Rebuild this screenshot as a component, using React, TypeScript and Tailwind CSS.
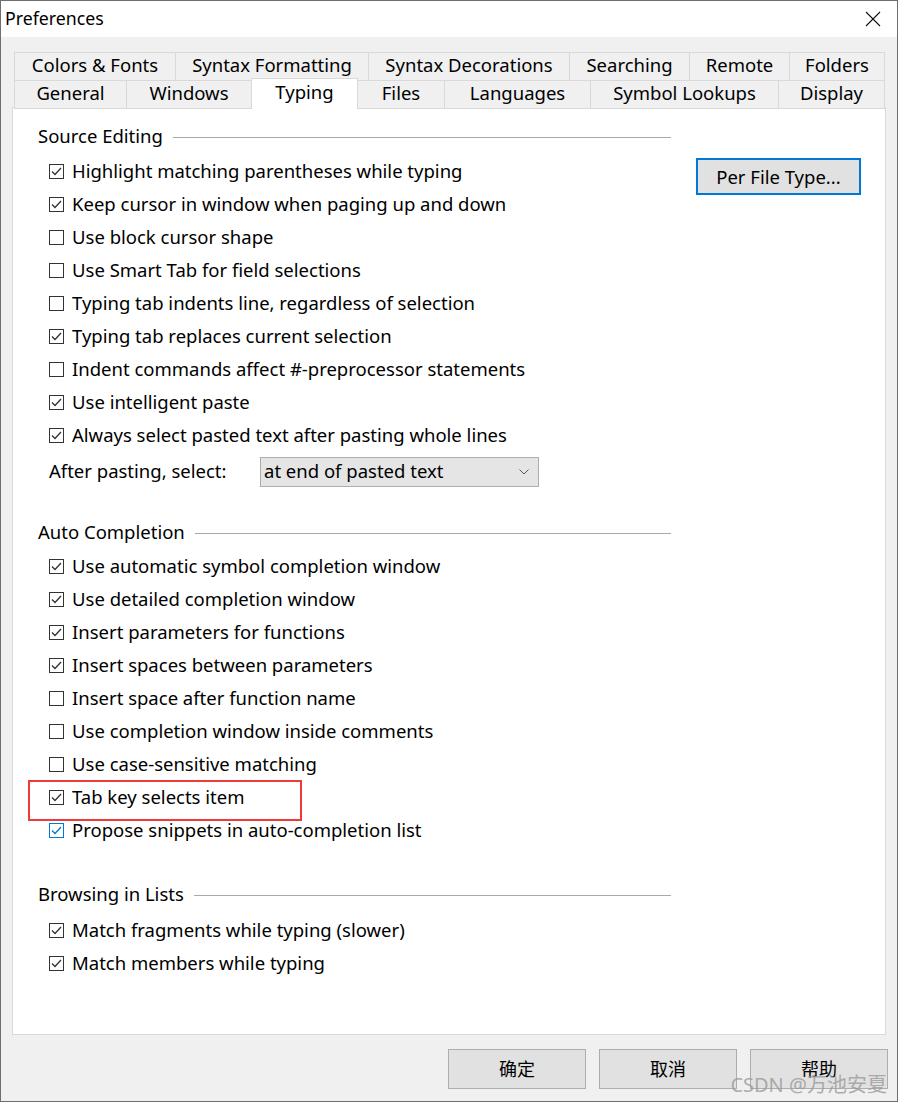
import React from 'react';

const font = "font-['Noto_Sans','Noto_Sans_CJK_SC',sans-serif]";

const tabsTop = [
  { label: 'Colors & Fonts', w: 'w-[162px]' },
  { label: 'Syntax Formatting', w: 'w-[194px]' },
  { label: 'Syntax Decorations', w: 'w-[202px]' },
  { label: 'Searching', w: 'w-[121px]' },
  { label: 'Remote', w: 'w-[101px]' },
  { label: 'Folders', w: 'w-[96px]' },
];

const tabsBottom = [
  { label: 'General', w: 'w-[113px]' },
  { label: 'Windows', w: 'w-[126px]' },
  { label: 'Typing', w: 'w-[107px]', active: true },
  { label: 'Files', w: 'w-[88px]' },
  { label: 'Languages', w: 'w-[147px]' },
  { label: 'Symbol Lookups', w: 'w-[189px]' },
  { label: 'Display', w: 'w-[107px]' },
];

function Check({ checked, blue }: { checked: boolean; blue?: boolean }) {
  return (
    <div
      className={`w-[15px] h-[15px] border bg-white shrink-0 flex items-center justify-center ${
        blue ? 'border-[#0078d7]' : 'border-[#333333]'
      }`}
    >
      {checked && (
        <svg width="13" height="13" viewBox="0 0 13 13">
          <polyline
            points="2,6.5 5,9.5 11,3"
            fill="none"
            stroke={blue ? '#0078d7' : '#333333'}
            strokeWidth="1.3"
          />
        </svg>
      )}
    </div>
  );
}

function Row({ label, checked, blue }: { label: string; checked: boolean; blue?: boolean }) {
  return (
    <div className="h-[33px] pl-[11px] flex items-center gap-[8px] text-[18.5px] text-black">
      <Check checked={checked} blue={blue} />
      <span className="leading-none">{label}</span>
    </div>
  );
}

function Heading({ title }: { title: string }) {
  return (
    <div className="h-[33px] flex items-center gap-[10px] text-[18.5px] text-black">
      <span className="leading-none whitespace-nowrap">{title}</span>
      <div className="flex-1 border-t border-[#a9a9a9] mt-[2px]" />
    </div>
  );
}

function Tab({ label, w, active }: { label: string; w: string; active?: boolean }) {
  if (active) {
    return (
      <div
        className={`${w} -ml-px relative z-10 -mt-[2px] h-[31px] pb-[4px] bg-white border border-b-0 border-[#d9d9d9] flex items-center justify-center text-[18.5px] text-black`}
      >
        {label}
      </div>
    );
  }
  return (
    <div
      className={`${w} -ml-px first:ml-0 h-[29px] pb-[3px] border border-[#d9d9d9] bg-[#f0f0f0] flex items-center justify-center text-[18.5px] text-black`}
    >
      {label}
    </div>
  );
}

export default function App() {
  return (
    <div className={`${font} w-[898px] h-[1102px] bg-[#f0f0f0] border border-[#6e6e6e] flex flex-col relative`}>
      {/* Title bar */}
      <div className="h-[36px] bg-white flex items-center justify-between pl-[4px] pr-[16px]">
        <span className="text-[17.75px] text-black leading-none">Preferences</span>
        <svg width="16" height="16" viewBox="0 0 16 16">
          <line x1="1" y1="1" x2="15" y2="15" stroke="#111" strokeWidth="1.1" />
          <line x1="15" y1="1" x2="1" y2="15" stroke="#111" strokeWidth="1.1" />
        </svg>
      </div>

      <div className="pl-[11px] pt-[15px]">
        {/* Tabs */}
        <div className="ml-[2px]">
          <div className="flex">
            {tabsTop.map(t => (
              <Tab key={t.label} {...t} />
            ))}
          </div>
          <div className="flex -mt-px items-start">
            {tabsBottom.map(t => (
              <Tab key={t.label} {...t} />
            ))}
          </div>
        </div>

        {/* Panel */}
        <div className="-mt-[2px] w-[874px] h-[928px] bg-white border border-[#d9d9d9] flex pl-[25px] pt-[12px]">
          <div className="w-[633px] flex flex-col">
            <Heading title="Source Editing" />
            <div className="mt-[2px]">
              <Row label="Highlight matching parentheses while typing" checked />
              <Row label="Keep cursor in window when paging up and down" checked />
              <Row label="Use block cursor shape" checked={false} />
              <Row label="Use Smart Tab for field selections" checked={false} />
              <Row label="Typing tab indents line, regardless of selection" checked={false} />
              <Row label="Typing tab replaces current selection" checked />
              <Row label="Indent commands affect #-preprocessor statements" checked={false} />
              <Row label="Use intelligent paste" checked />
              <Row label="Always select pasted text after pasting whole lines" checked />
            </div>
            <div className="mt-[3px] h-[33px] pl-[11px] flex items-center text-[18.5px] text-black">
              <span className="w-[211px] leading-none">After pasting, select:</span>
              <div className="w-[279px] h-[30px] bg-[#e5e5e5] border border-[#adadad] flex items-center justify-between pl-[3px] pr-[9px]">
                <span className="leading-none">at end of pasted text</span>
                <svg width="10" height="6" viewBox="0 0 10 6">
                  <polyline points="0.5,0.5 5,5 9.5,0.5" fill="none" stroke="#555" strokeWidth="1" />
                </svg>
              </div>
            </div>

            <div className="mt-[28px]">
              <Heading title="Auto Completion" />
            </div>
            <div className="mt-[1px]">
              <Row label="Use automatic symbol completion window" checked />
              <Row label="Use detailed completion window" checked />
              <Row label="Insert parameters for functions" checked />
              <Row label="Insert spaces between parameters" checked />
              <Row label="Insert space after function name" checked={false} />
              <Row label="Use completion window inside comments" checked={false} />
              <Row label="Use case-sensitive matching" checked={false} />
              <div className="relative">
                <Row label="Tab key selects item" checked />
                <div className="absolute left-[-10px] top-[-1px] w-[274px] h-[41px] border-2 border-[#f03a3a] pointer-events-none" />
              </div>
              <Row label="Propose snippets in auto-completion list" checked blue />
            </div>

            <div className="mt-[31px]">
              <Heading title="Browsing in Lists" />
            </div>
            <div className="mt-[3px]">
              <Row label="Match fragments while typing (slower)" checked />
              <Row label="Match members while typing" checked />
            </div>
          </div>

          <div className="ml-[25px] mt-[38px]">
            <div className="w-[165px] h-[37px] bg-[#e1e1e1] border-2 border-[#0078d7] flex items-center justify-center text-[18.5px] text-black">
              Per File Type...
            </div>
          </div>
        </div>
      </div>

      {/* Footer buttons */}
      <div className="mt-[14px] flex justify-end gap-[13px] pr-[9px]">
        {['确定', '取消', '帮助'].map(b => (
          <div
            key={b}
            className="w-[138px] h-[40px] bg-[#e1e1e1] border border-[#adadad] flex items-center justify-center text-[18px] text-black"
          >
            {b}
          </div>
        ))}
      </div>

      <div className="absolute right-[10px] bottom-[6px] text-[20px] leading-none text-[#9a9a9a]/80 pointer-events-none">
        CSDN @万池安夏
      </div>
    </div>
  );
}
